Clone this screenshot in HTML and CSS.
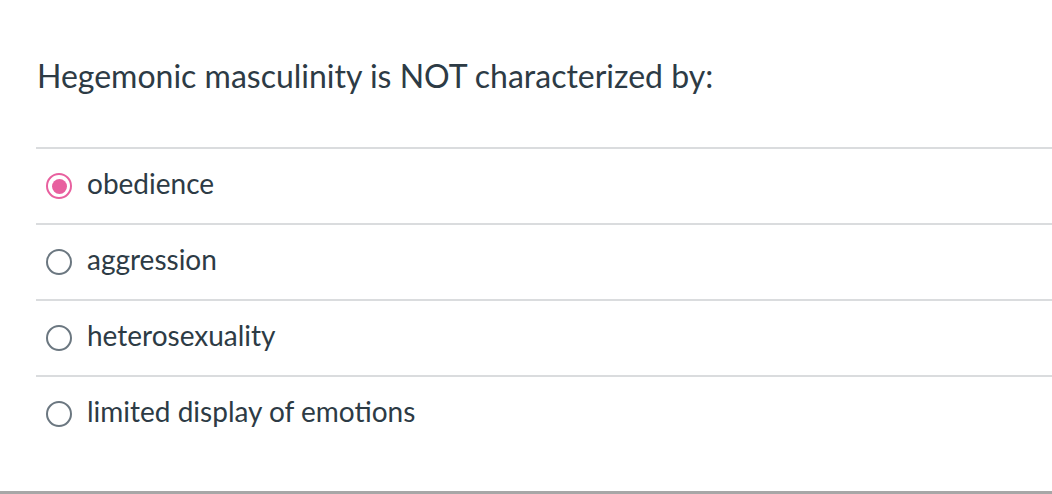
FILE: index.html
```html
<!DOCTYPE html>
<html>
<head>
<meta charset="utf-8">
<link rel="stylesheet" href="styles.css">
</head>
<body>
<div class="page">
  <div class="question">
    <h1 class="prompt">Hegemonic masculinity is NOT characterized by:</h1>
    <ul class="answers">
      <li class="answer"><span class="radio selected"></span><span class="label">obedience</span></li>
      <li class="answer"><span class="radio"></span><span class="label">aggression</span></li>
      <li class="answer"><span class="radio"></span><span class="label">heterosexuality</span></li>
      <li class="answer"><span class="radio"></span><span class="label">limited display of emotions</span></li>
    </ul>
  </div>
  <div class="footer-rule"></div>
</div>
</body>
</html>
```
FILE: styles.css
```css
html, body {
  margin: 0;
  padding: 0;
  background: #ffffff;
}
.page {
  width: 1052px;
  height: 494px;
  display: flex;
  flex-direction: column;
  font-family: Lato, "Liberation Sans", sans-serif;
  color: #2d3b45;
}
.question {
  flex: 1;
  padding-left: 36px;
}
.prompt {
  margin: 0 0 47px 0;
  padding: 52px 0 0 1px;
  font-size: 32px;
  font-weight: 400;
  line-height: 48px;
}
.answers {
  list-style: none;
  margin: 0;
  padding: 0;
  border-top: 2px solid #dadcde;
}
.answer {
  display: flex;
  align-items: center;
  height: 74px;
  border-bottom: 2px solid #dadcde;
  gap: 15px;
  padding-left: 10px;
}
.answer:last-child {
  border-bottom: none;
}
.radio {
  width: 26px;
  height: 26px;
  box-sizing: border-box;
  border: 2px solid #6b7780;
  border-radius: 50%;
  display: flex;
  align-items: center;
  justify-content: center;
  flex: none;
}
.radio.selected {
  border-color: #e8609f;
}
.radio.selected::after {
  content: "";
  width: 15px;
  height: 15px;
  border-radius: 50%;
  background: #e8609f;
}
.label {
  font-size: 28px;
  line-height: 34px;
  margin-bottom: 6px;
}
.footer-rule {
  height: 3px;
  background: #a7a7a7;
}
```
